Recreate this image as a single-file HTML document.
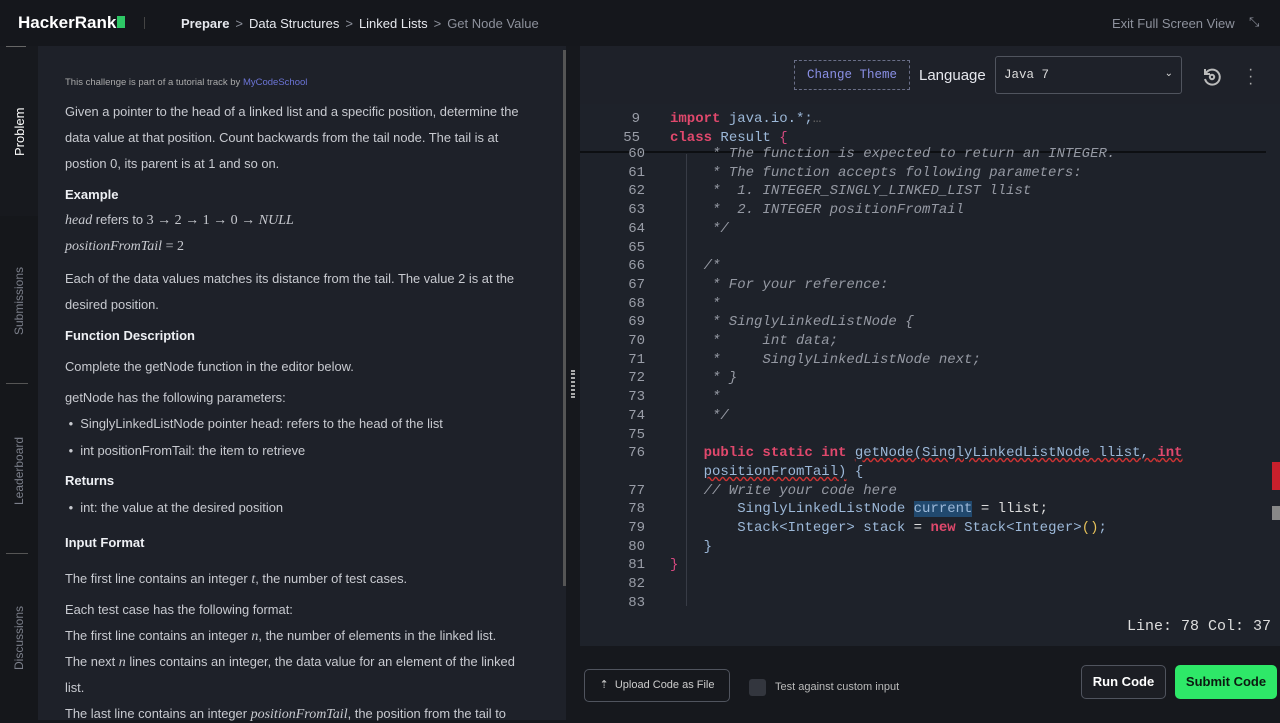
<!DOCTYPE html>
<html><head><meta charset="utf-8"><style>
*{margin:0;padding:0;box-sizing:border-box}
body{width:1280px;height:720px;background:#16181d;font-family:"Liberation Sans",sans-serif;overflow:hidden;position:relative;color:#d8dae0}
.hdr{position:absolute;left:0;top:0;width:1280px;height:46px;background:#15171c}
.logo{position:absolute;left:18px;top:13px;font-weight:bold;font-size:17px;color:#fff}
.logo i{display:inline-block;width:8px;height:12px;background:#2ec866;margin-left:1px}
.crumb{position:absolute;left:181px;top:16px;font-size:13px;color:#e6e8ee}
.crumb span.g{color:#8d919c}
.crumb .s{color:#8d919c;margin:0 6px}
.side{position:absolute;left:0;top:46px;width:38px;height:674px;background:#17191e}
.vt{position:absolute;transform:rotate(-90deg);transform-origin:left top;font-size:12px;color:#7b7f8a;white-space:nowrap}
.left{position:absolute;left:38px;top:46px;width:528px;height:674px;background:#1e2129;font-size:12.9px;color:#c8cad0}
.left p{position:absolute;left:27px;white-space:nowrap}
.left b{color:#eef0f4;font-size:13px}
.m{font-family:"Liberation Serif",serif;font-style:italic;font-size:14px}
.ed{position:absolute;left:580px;top:46px;width:700px;height:600px;background:#1e222a}
pre{font-family:"Liberation Mono",monospace;font-size:14px;position:absolute;white-space:pre;color:#9cb8d8}
.ln{color:#9a9ea8;text-align:right;width:40px}
.k{color:#e0486c;font-weight:bold}
.c{color:#9599a3;font-style:italic}
.bot{position:absolute;left:566px;top:646px;width:714px;height:74px;background:#16181d}
.btn{position:absolute;border:1px solid #50545e;border-radius:5px;font-size:13px;color:#fff;text-align:center}
</style></head><body>
<div class="hdr">
<div class="logo">HackerRank<i></i></div>
<div style="position:absolute;left:144px;top:17px;width:1px;height:12px;background:#444"></div>
<div class="crumb"><b style="font-weight:bold">Prepare</b><span class="s">&gt;</span>Data Structures<span class="s">&gt;</span>Linked Lists<span class="s">&gt;</span><span class="g">Get Node Value</span></div>
<div style="position:absolute;left:1112px;top:16px;font-size:13px;color:#8d919c">Exit Full Screen View</div>
<div style="position:absolute;left:1249px;top:14px;font-size:13px;color:#8d919c">⤡</div>
</div>
<div class="side">
<div style="position:absolute;left:6px;top:0;width:20px;height:1px;background:#666"></div>
<div class="vt" style="left:12px;top:110px;color:#fff;font-size:13px">Problem</div>
<div style="position:absolute;left:0;top:170px;width:38px;height:504px;background:#15171b"></div>
<div class="vt" style="left:12px;top:289px">Submissions</div>
<div style="position:absolute;left:6px;top:337px;width:22px;height:1px;background:#555"></div>
<div class="vt" style="left:12px;top:459px">Leaderboard</div>
<div style="position:absolute;left:6px;top:507px;width:22px;height:1px;background:#555"></div>
<div class="vt" style="left:12px;top:624px">Discussions</div>
</div>
<div class="left">
<p style="top:31px;font-size:9.5px;color:#aaa">This challenge is part of a tutorial track by <span style="color:#6b74d6">MyCodeSchool</span></p>
<p style="top:58px">Given a pointer to the head of a linked list and a specific position, determine the</p>
<p style="top:84px">data value at that position. Count backwards from the tail node. The tail is at</p>
<p style="top:110px">postion 0, its parent is at 1 and so on.</p>
<p style="top:141px"><b>Example</b></p>
<p style="top:166px"><span class="m">head</span> refers to <span class="m" style="font-style:normal">3 → 2 → 1 → 0 →</span> <span class="m">NULL</span></p>
<p style="top:192px"><span class="m">positionFromTail</span> <span class="m" style="font-style:normal">= 2</span></p>
<p style="top:225px">Each of the data values matches its distance from the tail. The value 2 is at the</p>
<p style="top:251px">desired position.</p>
<p style="top:282px"><b>Function Description</b></p>
<p style="top:313px">Complete the getNode function in the editor below.</p>
<p style="top:344px">getNode has the following parameters:</p>
<p style="top:370px">&nbsp;• &nbsp;SinglyLinkedListNode pointer head: refers to the head of the list</p>
<p style="top:397px">&nbsp;• &nbsp;int positionFromTail: the item to retrieve</p>
<p style="top:427px"><b>Returns</b></p>
<p style="top:454px">&nbsp;• &nbsp;int: the value at the desired position</p>
<p style="top:489px"><b>Input Format</b></p>
<p style="top:525px">The first line contains an integer <span class="m">t</span>, the number of test cases.</p>
<p style="top:556px">Each test case has the following format:</p>
<p style="top:582px">The first line contains an integer <span class="m">n</span>, the number of elements in the linked list.</p>
<p style="top:608px">The next <span class="m">n</span> lines contains an integer, the data value for an element of the linked</p>
<p style="top:634px">list.</p>
<p style="top:660px">The last line contains an integer <span class="m">positionFromTail</span>, the position from the tail to</p>
<div style="position:absolute;left:525px;top:4px;width:3px;height:536px;background:#555"></div>
</div>
<div style="position:absolute;left:571px;top:370px;width:4px;height:28px;border-left:2px dotted #aaa;border-right:2px dotted #aaa"></div>
<div class="ed">
<div style="position:absolute;left:0;top:0;width:700px;height:58px;background:#1e2129"></div>
<div style="position:absolute;left:214px;top:14px;width:116px;height:30px;border:1px dashed #6a6f88;color:#8a90e6;font-family:'Liberation Mono',monospace;font-size:12.5px;line-height:28px;text-align:center">Change Theme</div>
<div style="position:absolute;left:339px;top:21px;font-size:15px;color:#e6e8ee">Language</div>
<div style="position:absolute;left:415px;top:10px;width:187px;height:38px;border:1px solid #50545e;border-radius:3px;font-family:'Liberation Mono',monospace;font-size:12.5px;line-height:36px;padding-left:8px;color:#ddd">Java 7<span style="position:absolute;right:8px;font-size:10px">⌄</span></div>
<svg style="position:absolute;left:622px;top:21px" width="20" height="20" viewBox="0 0 20 20" fill="none" stroke="#bbb" stroke-width="2"><path d="M4 6A7.5 7.5 0 1 1 3 12"/><path d="M3 2v5h5"/><circle cx="10" cy="10" r="2.2"/></svg>
<div style="position:absolute;left:668px;top:20px;color:#aaa;font-size:16px;line-height:7px">·<br>·<br>·</div>
<div style="position:absolute;left:0;top:105px;width:686px;height:2px;background:#0d0f12"></div>
<div style="position:absolute;left:106px;top:108px;width:1px;height:452px;background:#383c46"></div>
<div style="position:absolute;left:692px;top:416px;width:8px;height:28px;background:#c8202c"></div>
<div style="position:absolute;left:692px;top:460px;width:8px;height:14px;background:#888"></div>
</div>
<pre class="ln" style="left:600px;top:110px;line-height:18.7px">9
55</pre>
<pre style="left:670px;top:110px;line-height:18.7px"><span class="k">import</span> java.io.*;<span style="color:#666">…</span>
<span class="k">class</span> Result <span style="color:#d5497f">{</span></pre>
<pre class="ln" style="left:605px;top:145px;line-height:18.7px">60
61
62
63
64
65
66
67
68
69
70
71
72
73
74
75
76

77
78
79
80
81
82
83</pre>
<pre style="left:670px;top:145px;line-height:18.7px"><span class="c">     * The function is expected to return an INTEGER.
     * The function accepts following parameters:
     *  1. INTEGER_SINGLY_LINKED_LIST llist
     *  2. INTEGER positionFromTail
     */

    /*
     * For your reference:
     *
     * SinglyLinkedListNode {
     *     int data;
     *     SinglyLinkedListNode next;
     * }
     *
     */
</span>
    <span class="k">public static int</span> <span style="text-decoration:underline wavy #c33">getNode(SinglyLinkedListNode llist, <span class="k">int</span></span>
    <span style="text-decoration:underline wavy #c33">positionFromTail)</span> {
    <span class="c">// Write your code here</span>
        SinglyLinkedListNode <span style="background:#21496e">current</span> <span style="color:#ddd">= llist;</span>
        Stack&lt;Integer&gt; stack <span style="color:#ddd">=</span> <span class="k">new</span> Stack&lt;Integer&gt;<span style="color:#e5c15a">()</span>;
    }
<span style="color:#d5497f">}</span>
</pre>
<div style="position:absolute;left:1127px;top:618px;font-family:'Liberation Mono',monospace;font-size:15px;color:#ddd">Line: 78 Col: 37</div>
<div class="bot">
<div class="btn" style="left:18px;top:23px;width:146px;height:33px;line-height:31px;font-size:11px;color:#ccc">⇡ &nbsp;Upload Code as File</div>
<div style="position:absolute;left:183px;top:33px;width:17px;height:17px;border-radius:3px;background:#33363e"></div>
<div style="position:absolute;left:209px;top:35px;font-size:11px;color:#bbb">Test against custom input</div>
<div class="btn" style="left:515px;top:19px;width:85px;height:34px;line-height:32px;font-weight:bold;background:#1c1e24">Run Code</div>
<div class="btn" style="left:609px;top:19px;width:102px;height:34px;line-height:34px;border:none;background:#2ee868;color:#0b1a10;font-weight:bold">Submit Code</div>
</div>
</body></html>
